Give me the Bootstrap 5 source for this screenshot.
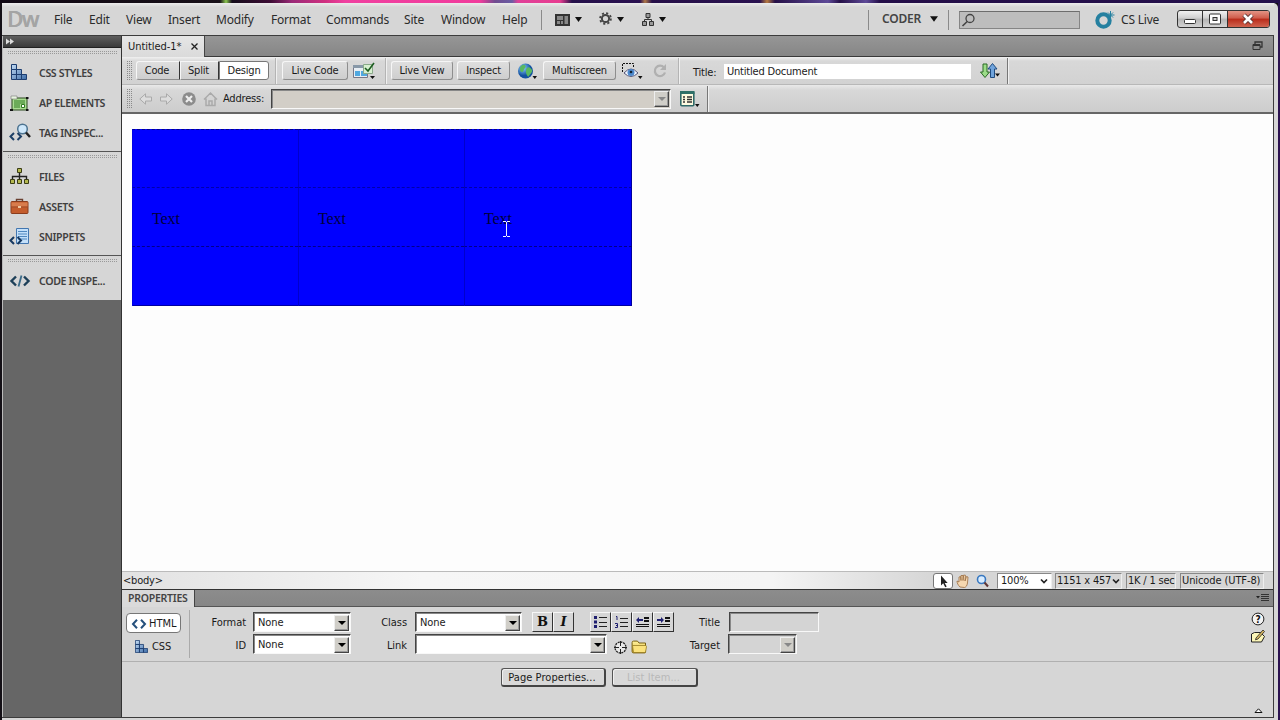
<!DOCTYPE html>
<html lang="en">
<head>
<meta charset="utf-8">
<title>Untitled-1 - Web editor</title>
<link rel="stylesheet" href="https://cdn.jsdelivr.net/npm/bootstrap@5.3.0/dist/css/bootstrap.min.css">
<style>
:root{--ui:"DejaVu Sans Condensed","DejaVu Sans",sans-serif;--menu:"Noto Sans","Open Sans",sans-serif}
body{width:1280px;height:720px;overflow:hidden;background:#1c0f38;font:11px/14px var(--ui);font-stretch:condensed;letter-spacing:-.2px;color:#1a1a1a}
svg{display:block;overflow:visible}
.wallpaper{height:3px;background:linear-gradient(90deg,#100814 0,#181018 220px,#8cc850 226px,#150d1b 232px,#3c0c34 270px,#9b2a78 292px,#d03080 325px,#f040a0 345px,#f13b9c 480px,#704c90 495px,#6b5da4 512px,#e04098 518px,#e83c90 560px,#25104a 572px,#2a1050 640px,#b07848 645px,#260f48 652px,#2a1250 760px,#b87a40 767px,#261048 775px,#5e4a98 828px,#261048 840px,#5e4a98 866px,#240e48 880px,#24104c 1280px)}
.app-window{height:717px;padding:0 0 0 2px;background:#141016;border-right:2px solid #2b1250}
.frame{height:717px;background:#d6d6d6;border-top-right-radius:5px;padding-right:4px}
.bar-grid{display:grid;align-items:center;white-space:nowrap}
.bar-grid>*{min-width:0}
/* menu bar */
.menubar{height:32px;padding:1px 0 0 6px;font:12px/16px var(--menu);letter-spacing:-.2px;color:#2b2b2b;background:linear-gradient(#ececec,#d6d6d6 4px);
 grid-template-columns:46px 35px 37px 42px 48px 55px 55px 78px 37px 61px 39px 14px 20px 24px 17px 26px 16px 210px 14px 48px 18px 11px 136px 26px 56px 93px}
.brand{font:500 22px/22px var(--menu);color:#a4a4a4;letter-spacing:-1.6px;text-shadow:.6px 0 #a4a4a4;margin:-3px 0 0 -1px}
.vline{width:1px;height:20px;background:#8a8a8a}
.workspace{font-weight:600;color:#444;letter-spacing:-.2px;margin-top:-2px}
.searchbox{width:121px;height:18px;background:#bdbdbd;border:1px solid #858585;border-top-color:#6d6d6d}
.winctl{width:93px;height:18px;border:1px solid #333;border-radius:3px;overflow:hidden;background:linear-gradient(#f2f2f2,#cfcfcf 45%,#b4b4b4 50%,#d4d4d4);margin-top:-1px}
.winctl>span{width:25px;border-right:1px solid #333}
.winctl>.closer{width:42px;border:0;background:linear-gradient(#e49485,#cf5b4a 45%,#b92b1a 50%,#d06450)}
/* dock */
.workarea{height:683px;border-top:1px solid #3c3c3c;border-right:1px solid #3c3c3c;border-bottom:1px solid #3c3c3c}
.dock{width:120px;background:#666;border-left:1px solid #bbb;border-right:1px solid #333;font:600 10.6px/14px var(--menu);color:#404040;letter-spacing:-.36px}
.dock-top{height:12px;background:linear-gradient(#5e5e5e,#3a3a3a);border-bottom:1px solid #202020}
.dock-group{background:#d6d6d6;border-bottom:1px solid #555;padding-top:3px}
.grip-h{height:4px;margin:0 4px 3px 5px;background:radial-gradient(circle at .5px .5px,#999 .6px,transparent .8px) 0 0/2px 2px}
.dock-item{height:30px;padding-left:6px;gap:8px}
.dock-item svg{width:22px;height:20px}
.dock-spacer{height:3px}
/* documents */
.doc-tabs{height:21px;background:linear-gradient(#969696,#868686);border-bottom:1px solid #3a3a3a}
.doc-tab{width:83px;height:21px;padding:0 6px;background:linear-gradient(#e6e6e6,#dadada);border-right:1px solid #444;letter-spacing:-.05px}
.grip-v{width:6px;height:19px;background:radial-gradient(circle at .5px .5px,#8a8a8a .6px,transparent .8px) 0 0/2px 2px}
.tb1{height:28px;padding-left:5px;background:linear-gradient(#f0f0f0,#d8d8d8 4px,#d2d2d2);border-bottom:1px solid #b8b8b8;
 grid-template-columns:9px 139px 7px 71px 32px 6px 66px 61px 25px 78px 32px 25px 15px 31px 256px 27px 1fr}
.tb2{height:29px;padding-left:5px;background:linear-gradient(#e9e9e9,#d8d8d8 5px,#cdcdcd);border-bottom:2px solid #666;
 grid-template-columns:12px 20px 23px 21px 20px 48px 409px 27px 1fr}
.split{width:1px;height:26px;background:#b4b4b4;box-shadow:1px 0 #f0f0f0}
.split.dark{background:#777}
.tbtn{height:19px;border:1px solid;border-color:#f6f6f6 #8e8e8e #8e8e8e #f6f6f6;border-radius:3px;display:flex;align-items:center;justify-content:center;background:linear-gradient(#dedede,#cecece)}
.tseg{width:133px}.tseg .tbtn{border-radius:0;border-right-color:#333}
.tseg .tbtn:first-child{width:44px;border-radius:3px 0 0 3px;padding-right:2px}.tseg .tbtn:nth-child(2){width:39px;padding-right:2px}
.tseg .tbtn:last-child{width:50px;border-radius:0 3px 3px 0;background:#fff;border-color:#777}
.live-code{width:66px}.multi{width:73px}.live-view{width:62px}
.doc-title{width:247px;height:15px;padding:1px 0 0 3px;margin-top:1px}
.addr{width:400px;height:20px}
.sunken{border:1px solid;border-color:#444 #f8f8f8 #f8f8f8 #444;background:#fff;display:flex;align-items:center;justify-content:space-between;box-shadow:inset 1px 1px #888}
.sunken.addr{background:#d2cec7}
.drop{width:15px;height:16px;margin:1px 1px 0 0;border:1px solid;border-color:#eee #444 #444 #eee;box-shadow:inset -1px -1px #999;background:#d0cec8;display:flex;align-items:center;justify-content:center;flex:none}
.drop:after{content:"";border:4px solid transparent;border-top-color:#000;border-bottom:0}
.drop.off:after{border-top-color:#888}
/* canvas */
.canvas{height:457px;background:#fdfdfd;padding:15px 0 0 10px;position:relative}
.sheet{width:500px;height:177px;display:grid;grid-template-columns:166px 166px 168px;grid-template-rows:58px 59px 60px;background:#00f;color:#00003c;font:16px/20px "Liberation Serif",serif;letter-spacing:-.1px;border-right:1px solid #0000a0;border-bottom:1px solid #0000a0}
.sheet>div{border-top:1px dashed #000090;border-left:1px solid #0000cc;padding:21px 0 0 19px}
.sheet>div:nth-child(n+4){border-top-color:#0000a8}
.sheet>div:nth-child(n+7){border-top-color:#000088}
.sheet>div:nth-child(3n+1){border-left-color:#0000e8}
.caret{position:absolute;left:380px;top:107px}
/* status */
.status{height:18px;background:linear-gradient(90deg,#e2e2e2,#f6f6f6 300px,#f4f4f4 650px,#d6d6d6 812px);border-top:1px solid #bbb;padding:1px 0 0 1px;
 grid-template-columns:810px 22px 21px 21px 58px 71px 54px 1fr}
.cell{height:16px;border:1px solid;border-color:#888 #eee #eee #888;line-height:14px;display:flex;align-items:center}
.cell svg{flex:none}
.toolon{width:20px;height:16px;background:#fff;border:1px solid #777;border-radius:3px}
.zoomcell{width:55px;padding:0 3px}.dim{width:67px;padding:0 1px 0 1px}.rate{padding-left:1px;width:50px}.enc{width:84px;padding-left:1px;letter-spacing:-.1px}
/* properties */
.prop-tabs{height:18px;background:linear-gradient(#8c8c8c,#868686);border-top:1px solid #333;border-bottom:1px solid #555}
.prop-tab{width:73px;height:17px;background:#dadada;border-right:1px solid #444;font:600 10.5px/16px var(--menu);color:#444;padding-left:6px;letter-spacing:-.25px}
.prop{height:111px;letter-spacing:-.04px}
.ptop{height:55px;border-bottom:1px solid #b0b0b0;padding-bottom:2px}
.modebtns{width:68px;height:48px;border-right:1px solid #aaa;margin-top:3px}
.mode{width:55px;height:20px;margin:3px 0 0 4px;padding:1px 0 0 9px;gap:4px}
.mode.on{background:#fff;border:1px solid #777;border-radius:4px;padding-left:5px;gap:3px}
.prow{height:22px}
.r1{grid-template-columns:56px 7px 117px 37px 8px 117px 58px 100px 30px 9px 1fr}
.r2{grid-template-columns:56px 7px 117px 37px 8px 198px 18px 59px 30px 8px 1fr}
.prow .text-end{display:flex;justify-content:flex-end}
.r1 .text-end{padding-top:1px}
.rbtn{width:21px;height:20px;border:1px solid;border-color:#f6f6f6 #333 #333 #f6f6f6;display:flex;align-items:center;justify-content:center}
.rbtn b,.rbtn i{font:bold 13px/16px "DejaVu Serif",serif;color:#111}.rbtn i{font-style:italic}
.sel-s{width:98px}.sel-m{width:107px}.sel-l{width:192px}.in-title{width:90px}.in-target{width:69px}
.none-label{padding-top:1px}
.field{height:20px}
.sunken.flat{background:#d4d4d4}
.pushbtn{height:19px;border:1px solid #555;border-right:2px solid #444;border-bottom:2px solid #444;border-radius:3px;box-shadow:inset 1px 1px #f0f0f0;background:#d8d8d8;line-height:17px;text-align:center;letter-spacing:.05px;padding-right:2px}
.pushbtn.li{width:86px;color:#b8b8b8}
.pushbtn.pp{width:105px}
.helpcol{width:22px;padding-top:5px}
.pbot{height:55px}.pbtns{padding:6px 0 0 379px;gap:6px}
.collapse-arrow{margin:0 10px 4px 0}
</style>
<script src="https://cdn.jsdelivr.net/npm/bootstrap@5.3.0/dist/js/bootstrap.bundle.min.js"></script>
</head>
<body>
<svg width="0" height="0" class="position-absolute">
 <defs>
  <linearGradient id="bl" x1="0" y1="0" x2="1" y2="1"><stop offset="0" stop-color="#c4dcf4"/><stop offset="1" stop-color="#3d6ca8"/></linearGradient>
  <radialGradient id="gl" cx=".35" cy=".3"><stop offset="0" stop-color="#8fd2ff"/><stop offset="1" stop-color="#1250a0"/></radialGradient>
  <linearGradient id="fo" x1="0" y1="0" x2="0" y2="1"><stop offset="0" stop-color="#fff3a0"/><stop offset="1" stop-color="#e0b32c"/></linearGradient>
  <symbol id="dn" viewBox="0 0 7 5"><path d="M0 0h7L3.500 5z" fill="#111"/></symbol>
  <symbol id="cssblocks" viewBox="0 0 16 16"><path d="M.5.5h5v5h-5zM.5 5.500h5v5h-5zM5.500 5.500h5v5h-5zM.5 10.500h5v5h-5zM5.500 10.500h5v5h-5zM10.500 10.500h5v5h-5z" fill="url(#bl)" stroke="#1c3d70"/></symbol>
 </defs>
</svg>
<div class="wallpaper"></div>
<div class="app-window"><div class="frame">
 <nav class="menubar bar-grid">
  <span class="brand">Dw</span><span>File</span><span>Edit</span><span>View</span><span>Insert</span><span>Modify</span><span>Format</span><span>Commands</span><span>Site</span><span>Window</span><span>Help</span>
  <span class="vline"></span>
  <svg width="15" height="12"><path d="M0 0h15v12H0z" fill="#333"/><path d="M2 2h6v4H2zM2 7h3v3H2zM6 7h2v3H6zM9.500 2h3.500v8H9.500z" fill="#888"/></svg>
  <svg width="7" height="5"><use href="#dn"/></svg>
  <svg width="13" height="13" viewBox="-6.500 -5.500 13 13"><circle r="3.600" fill="none" stroke="#444" stroke-width="2"/><circle r="5.400" fill="none" stroke="#444" stroke-width="1.800" stroke-dasharray="2.120 2.120"/></svg>
  <svg width="7" height="5" viewBox="-1 0 7 5"><use href="#dn" width="7" height="5"/></svg>
  <svg width="12" height="13"><path d="M4 .5h4v4H4zM.5 8.500h4v4h-4zM7.500 8.500h4v4h-4z" fill="#999" stroke="#333"/><path d="M6 5v2M2.500 8V6.500h7V8" fill="none" stroke="#333"/></svg>
  <svg width="7" height="5" viewBox="-1 0 7 5"><use href="#dn" width="7" height="5"/></svg>
  <span class="vline"></span><span class="workspace">CODER</span>
  <svg width="8" height="6" viewBox="0 1 8 6"><use href="#dn" width="8" height="6"/></svg><span class="vline"></span>
  <div class="searchbox"><svg width="14" height="14" viewBox="0 0 14 14" class="ms-1"><circle cx="6" cy="6.500" r="4" fill="none" stroke="#444" stroke-width="1.300"/><path d="M3.200 9.500-1.500 14" stroke="#444" stroke-width="1.600"/></svg></div>
  <svg width="21" height="18"><circle cx="8.500" cy="9.500" r="6.200" fill="none" stroke="#2580a0" stroke-width="4"/><path d="M15.500 0v8M11.500 4h8M13 1.500l5 5M18 1.500l-5 5" stroke="#2580a0"/></svg>
  <span>CS Live</span>
  <div class="winctl d-flex">
   <span><svg width="25" height="16"><rect x="6.500" y="8.500" width="11" height="4" rx="1" fill="#fff" stroke="#333"/></svg></span>
   <span><svg width="25" height="16"><rect x="6.500" y="3" width="11" height="10" rx="1" fill="#fff" stroke="#333"/><rect x="10" y="6.500" width="4" height="3" fill="#ccc" stroke="#333"/></svg></span>
   <span class="closer"><svg width="42" height="16"><path d="M16 4l8 8M24 4l-8 8" stroke="#553030" stroke-width="4.500"/><path d="M16 4l8 8M24 4l-8 8" stroke="#fff" stroke-width="2.600"/></svg></span>
  </div>
 </nav>
 <div class="workarea d-flex">
  <aside class="dock flex-shrink-0">
   <div class="dock-top"><svg width="12" height="10"><path d="M3 2.500l4 3-4 3zM7 2.500l4 3-4 3z" fill="#ddd"/></svg></div>
   <div class="dock-group"><div class="grip-h"></div>
    <div class="dock-item d-flex align-items-center"><svg viewBox="-2 -1 22 20"><use href="#cssblocks" width="16" height="16"/></svg>CSS STYLES</div>
    <div class="dock-item d-flex align-items-center"><svg viewBox="-1 -2 22 20"><path d="M2 3h15v12H2z" fill="#a8dc90" stroke="#2c4a20"/><path d="M1 1h6v3H1z" fill="#e8f4e0" stroke="#777" stroke-width=".6"/><path d="M4 6h11M4 8h11M4 10h6M4 12h6" stroke="#2f7a20"/><path d="M11.500 9.500h3v3h-3z" fill="#fff" stroke="#2f7a20"/><path d="M0 14h3v2H0zM16 14h2.500v2H16zM16 2h2.500v2H16z" fill="#111"/></svg>AP ELEMENTS</div>
    <div class="dock-item d-flex align-items-center"><svg viewBox="0 -1 22 20"><circle cx="13.500" cy="5" r="4.800" fill="#cfe8fb" stroke="#4d7390" stroke-width="1.500"/><path d="M17 8.500l4 4.500" stroke="#222" stroke-width="2.500"/><path d="M5 9L1.500 12.500 5 16M8.500 9l3.500 3.500L8.500 16" fill="none" stroke="#1d3f66" stroke-width="2"/></svg>TAG INSPEC...</div>
    <div class="dock-spacer"></div>
   </div>
   <div class="dock-group"><div class="grip-h"></div>
    <div class="dock-item d-flex align-items-center"><svg viewBox="0 -1 22 20"><path d="M10.500 5v6M3.500 11V8.500h14V11" fill="none" stroke="#222" stroke-width="1.400"/><path d="M8.500.5h4v4h-4zM1.500 11.500h4v4h-4zM8.500 11.500h4v4h-4zM15.500 11.500h4v4h-4z" fill="#b4b850" stroke="#3a3c14"/></svg>FILES</div>
    <div class="dock-item d-flex align-items-center"><svg viewBox="0 -1 22 20"><path d="M7.500 4V1.500h6V4" fill="none" stroke="#6a4030" stroke-width="1.400"/><rect x="2" y="3.500" width="17" height="12" rx="1" fill="#c45c2c" stroke="#8a3c1c"/><path d="M2.500 4.500h16v4h-16z" fill="#d87c4c"/><path d="M2 9h17" stroke="#a04c28"/><path d="M9 8h3v2H9z" fill="#f0c8a0"/></svg>ASSETS</div>
    <div class="dock-item d-flex align-items-center"><svg viewBox="0 -1 22 20"><path d="M7.500.5h12v15h-12z" fill="#c4e0fa" stroke="#4276b0"/><path d="M9 3.500h9M9 6h9M9 8.500h9M9 11h9" stroke="#5088c0"/><path d="M5 9L1.500 12.500 5 16M8.500 9L12 12.500 8.500 16" fill="none" stroke="#163860" stroke-width="2"/></svg>SNIPPETS</div>
    <div class="dock-spacer"></div>
   </div>
   <div class="dock-group border-0 pb-1"><div class="grip-h"></div>
    <div class="dock-item d-flex align-items-center"><svg viewBox="0 -1 22 20"><path d="M7 4.500L2.500 9 7 13.500M15 4.500L19.500 9 15 13.500" fill="none" stroke="#1d3f58" stroke-width="2.400"/><path d="M12.500 3.500l-3 11" stroke="#3a6a88" stroke-width="1.800"/></svg>CODE INSPE...</div>
   </div>
  </aside>
  <main class="flex-grow-1">
   <div class="doc-tabs d-flex justify-content-between"><div class="doc-tab d-flex align-items-center justify-content-between"><span>Untitled-1*</span><svg width="7" height="7"><path d="M.5.5l6 6M6.500.5l-6 6" stroke="#222" stroke-width="1.300"/></svg></div>
    <svg width="10" height="10" class="mt-1 me-2" viewBox="3 -1 10 10"><path d="M3 3V1h7v5H8" fill="none" stroke="#333" stroke-width="1.300"/><path d="M1 3.500h7v5H1z" fill="none" stroke="#333"/><path d="M1 4h7" stroke="#333" stroke-width="2"/></svg>
   </div>
   <div class="tb1 bar-grid">
    <span class="grip-v"></span>
    <div class="tseg d-flex"><span class="tbtn">Code</span><span class="tbtn">Split</span><span class="tbtn">Design</span></div>
    <span class="split"></span>
    <span class="tbtn live-code">Live Code</span>
    <svg width="23" height="18"><path d="M.5 3.500h14v12H.5z" fill="#e8eef4" stroke="#778"/><path d="M0 3h15v3H0z" fill="#8898a8"/><path d="M2 9h5v5H2zM8 9h6v5H8z" fill="#50a8e0"/><path d="M10.500 2.500h9v9h-9z" fill="#d8f0d0" stroke="#8aaa8a"/><path d="M12 6l3 3 6-8" fill="none" stroke="#1c5c20" stroke-width="1.600"/><path d="M17 14h5l-2.500 3z" fill="#111"/></svg>
    <span class="split"></span>
    <span class="tbtn live-view">Live View</span><span class="tbtn me-2">Inspect</span>
    <svg width="21" height="18"><circle cx="7.500" cy="9" r="7.500" fill="url(#gl)"/><path d="M3 4c3-3 6 0 4 2s-1 4-3 4-3-4-1-6zM9 6c2-2 4 0 5 2s-2 4-3 6-3-2-3-4 0-3 1-4z" fill="#58b860"/><path d="M14.500 14h4.500l-2.200 3z" fill="#111"/></svg>
    <span class="tbtn multi">Multiscreen</span>
    <svg width="22" height="18"><path d="M1.500 10V1.500h11V6" fill="none" stroke="#111" stroke-dasharray="2 1"/><path d="M3 11q7-8 14 0-7 7-14 0z" fill="#f0f6ff" stroke="#557"/><circle cx="10" cy="10.500" r="3.500" fill="#4b88cc"/><circle cx="10" cy="10" r="1.300" fill="#123"/><path d="M17 14h4.500l-2.200 3z" fill="#111"/></svg>
    <svg width="14" height="14"><path d="M11 3.500a5.200 5.200 0 1 0 1 5" fill="none" stroke="#b0b0b0" stroke-width="2.300"/><path d="M13 0v6H7z" fill="#b0b0b0"/></svg>
    <span class="split"></span><span class="pt-1 lh-1">Title:</span>
    <span class="doc-title bg-white">Untitled Document</span>
    <svg width="21" height="16"><path d="M3 1h4v8h2.500L5 14.500.5 9H3z" fill="#9cdc88" stroke="#2a6a24"/><path d="M10.500 14.500h4V6h2.500L12.500.5 8 6h2.500z" fill="#70a4dc" stroke="#204c80"/><path d="M15 10.500h5l-2.500 3z" fill="#111"/></svg>
    <span class="split dark"></span>
   </div>
   <div class="tb2 bar-grid">
    <span class="grip-v"></span>
    <svg width="13" height="12"><path d="M.8 6L6.500.8V4h6v4h-6v3.200z" fill="#ddd" stroke="#aaa"/></svg>
    <svg width="13" height="12" viewBox="-1 0 13 12"><path d="M12.200 6L6.500.8V4h-6v4h6v3.200z" fill="#ddd" stroke="#aaa"/></svg>
    <svg width="14" height="14"><circle cx="7" cy="7" r="6.800" fill="#8c8c8c"/><path d="M4 4l6 6M10 4l-6 6" stroke="#eee" stroke-width="2.200"/></svg>
    <svg width="15" height="14"><path d="M1 7.500L7.500 1 14 7.500M3 6.500v7h9v-7M6 13V9h3v4" fill="none" stroke="#aaa" stroke-width="1.500"/></svg>
    <span>Address:</span>
    <div class="sunken addr"><span></span><span class="drop off"></span></div>
    <svg width="20" height="18"><rect x=".8" y="1.800" width="13" height="14" rx="1" fill="#fffbe0" stroke="#2f6a68" stroke-width="1.600"/><path d="M0 1h14.500v3H0z" fill="#2f7068"/><path d="M3 7h2M7 7h5M3 9.500h2M7 9.500h5M3 12h2M7 12h5" stroke="#333" stroke-width="1.300"/><path d="M15 14h4.500l-2.200 3z" fill="#111"/></svg>
    <span class="split dark"></span>
   </div>
   <div class="canvas">
    <div class="sheet"><div></div><div></div><div></div><div>Text</div><div>Text</div><div>Text</div><div></div><div></div><div></div></div>
    <svg class="caret" width="9" height="16"><path d="M1 .5h3M5 .5h3M4.500 1v14M1 15.500h3M5 15.500h3" stroke="#eef" fill="none"/></svg>
   </div>
   <div class="status bar-grid">
    <span>&lt;body&gt;</span>
    <span class="toolon"><svg width="18" height="15"><path d="M7 1.500v10l2.200-2.200 2 4 1.500-.8-2-3.500h3z" fill="#222"/></svg></span>
    <svg width="16" height="14" viewBox="-1 0 16 14"><path d="M4 13C2 11 1 9 1 7l2 1V3l1.500-.5.5 4V1.500h2v5l.7-5.500 1.800.3L9 7l1.500-4.500 1.500.5-.5 6C11 12 10 13 8.500 13.500z" fill="#f6d8b0" stroke="#9a6c40" stroke-width=".8"/></svg>
    <svg width="14" height="14"><circle cx="5.500" cy="5.500" r="4" fill="#d8ecff" stroke="#3878c0" stroke-width="1.600"/><path d="M8.500 8.500l3.500 4" stroke="#603838" stroke-width="2"/></svg>
    <span class="cell zoomcell bg-white justify-content-between"><span>100%</span><svg width="8" height="5"><path d="M1 .5L4 3.500 7 .5" fill="none" stroke="#222" stroke-width="1.700"/></svg></span>
    <span class="cell dim justify-content-between"><span>1151 x 457</span><svg width="8" height="5"><path d="M1 .5L4 3.500 7 .5" fill="none" stroke="#222" stroke-width="1.700"/></svg></span>
    <span class="cell rate">1K / 1 sec</span>
    <span class="cell enc">Unicode (UTF-8)</span>
   </div>
   <section>
    <div class="prop-tabs d-flex justify-content-between align-items-start"><div class="prop-tab">PROPERTIES</div><svg class="mt-1 me-1" width="13" height="9"><path d="M0 2h4L2 4.500z" fill="#222"/><path d="M5 .5h8M5 2.500h8M5 4.500h8M5 6.500h8" stroke="#333"/></svg></div>
    <div class="prop">
     <div class="ptop d-flex">
      <div class="modebtns">
       <div class="mode on d-flex align-items-center"><svg width="14" height="10"><path d="M5 .8L1 5l4 4.200M9 .8L13 5 9 9.200" fill="none" stroke="#25507c" stroke-width="2"/></svg>HTML</div>
       <div class="mode d-flex align-items-center"><svg width="13" height="13"><use href="#cssblocks"/></svg>CSS</div>
      </div>
      <div class="pt-1 flex-grow-1">
       <div class="prow r1 bar-grid"><span class="text-end">Format</span><span></span>
        <div class="sunken sel-s field ps-1"><span class="none-label">None</span><span class="drop"></span></div><span class="text-end">Class</span><span></span>
        <div class="sunken sel-m field ps-1"><span class="none-label">None</span><span class="drop"></span></div>
        <div class="d-flex"><span class="rbtn"><b>B</b></span><span class="rbtn"><i>I</i></span></div>
        <div class="d-flex">
         <span class="rbtn"><svg width="13" height="12"><path d="M0 0h3v3H0zM0 4.500h3v3H0zM0 9h3v3H0z" fill="#202070"/><path d="M5 1.500h8M5 6.500h8M5 10.500h8" stroke="#222"/></svg></span>
         <span class="rbtn"><svg width="13" height="12"><path d="M1 .5h1V4M0 7.500h2.500v4H0M1 9.500h1.500" fill="none" stroke="#202070"/><path d="M5 2.500h8M5 6.500h8M5 10.500h8" stroke="#222"/></svg></span>
         <span class="rbtn"><svg width="13" height="11"><path d="M8 1h5M8 4h5" stroke="#111" stroke-width="2"/><path d="M0 7.500h13M0 9.500h13" stroke="#111"/><path d="M0 3l3-3v2h4v2H3v2z" fill="#202070"/></svg></span>
         <span class="rbtn"><svg width="13" height="11"><path d="M8 1h5M8 4h5" stroke="#111" stroke-width="2"/><path d="M0 7.500h13M0 9.500h13" stroke="#111"/><path d="M7 3L4 0v2H0v2h4v2z" fill="#202070"/></svg></span>
        </div>
        <span class="text-end">Title</span><span></span>
        <div class="sunken in-title field flat"></div>
       </div>
       <div class="prow r2 bar-grid"><span class="text-end pt-1">ID</span><span></span>
        <div class="sunken sel-s field ps-1"><span class="none-label">None</span><span class="drop"></span></div><span class="text-end pt-1">Link</span><span></span>
        <div class="sunken sel-l field"><span></span><span class="drop"></span></div>
        <svg class="mt-1" width="13" height="13" viewBox="-1 -1 13 13"><circle cx="6.500" cy="6.500" r="5.500" fill="#e8e8e8" stroke="#222" stroke-dasharray="2 .8" stroke-width="1.300"/><path d="M6.500 0v5M6.500 8v5M0 6.500h5M8 6.500h5" stroke="#222"/></svg>
        <svg class="mt-1" width="16" height="13" viewBox="-.5 -.5 16 13"><path d="M.6 11V2q0-1.400 1.400-1.400h4L7.500 2.500H14v9q0 .9-1 .9H2q-1.400 0-1.400-1.400z" fill="url(#fo)" stroke="#7a6010"/><path d="M1 5h13.500l.5 1-1 6H2z" fill="#fbe27c" stroke="#8a7018" stroke-width=".7"/></svg>
        <span class="text-end pt-1">Target</span><span></span>
        <div class="sunken in-target field flat"><span></span><span class="drop off"></span></div>
       </div>
      </div>
      <div class="helpcol"><svg width="14" height="14"><circle cx="7" cy="7" r="5.900" fill="#f4f4f4" stroke="#222"/><text x="7" y="10.500" text-anchor="middle" font-size="10" font-weight="bold" fill="#111">?</text></svg>
       <svg class="mt-1" width="15" height="13"><path d="M.5 4l3-1.500h6l4 4-3 5.500h-10z" fill="#fbf6b8" stroke="#222"/><path d="M5 8L12 0l1.500 1.500L7 9l-2.500.8z" fill="#d8b860" stroke="#222" stroke-width=".8"/></svg></div>
     </div>
     <div class="pbot d-flex justify-content-between align-items-end">
      <div class="d-flex align-self-start pbtns"><div class="pushbtn pp">Page Properties...</div><div class="pushbtn li">List Item...</div></div>
      <svg class="collapse-arrow" width="9" height="5"><path d="M1 4.500L4.500.8 8 4.500z" fill="#fff" stroke="#111"/></svg>
     </div>
    </div>
   </section>
  </main>
 </div>
</div></div>
</body>
</html>
